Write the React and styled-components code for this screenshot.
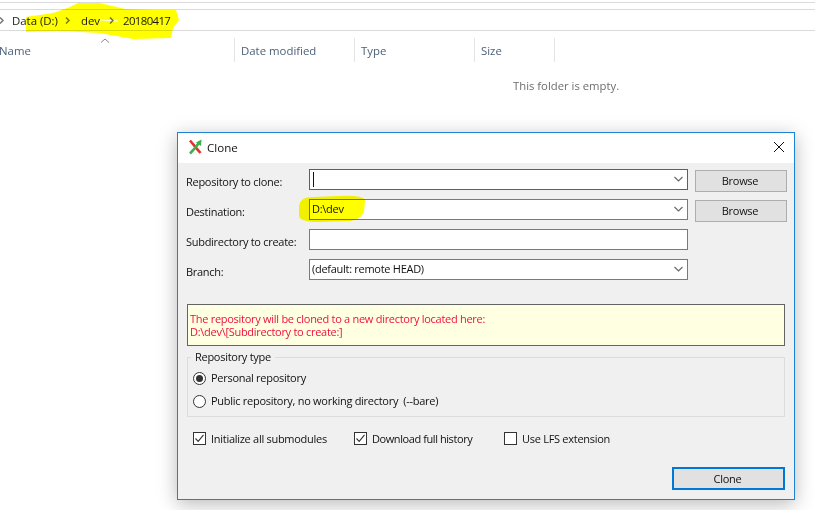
import React from "react";
import styled, { createGlobalStyle } from "styled-components";

const Global = createGlobalStyle`
  html, body { margin: 0; padding: 0; background: #fff; }
  body { font-family: "Open Sans", "Noto Sans", sans-serif; font-size: 11.4px; color: #1a1a1a; }
  * { box-sizing: border-box; }
`;

const Page = styled.div`
  position: relative;
  width: 815px;
  height: 510px;
  overflow: hidden;
  background: #fff;
`;

const Rule = styled.div`
  height: 1px;
  background: #dadada;
  margin-top: ${(p) => p.$top}px;
`;

const Breadcrumb = styled.div`
  display: flex;
  align-items: center;
  height: 21px;
  border-bottom: 1px solid #dadada;
  color: #1a1a1a;
`;

const Crumb = styled.span`
  margin-left: ${(p) => p.$gap}px;
  letter-spacing: ${(p) => p.$track || 0}px;
  white-space: nowrap;
`;

const CrumbArrow = styled.svg`
  width: 5px;
  height: 7px;
  margin-left: ${(p) => p.$gap}px;
  flex: none;
`;

const HeaderRow = styled.div`
  position: relative;
  display: flex;
  height: 24px;
  margin-top: 7px;
  margin-left: -1px;
  color: #4c607a;
`;

const Column = styled.div`
  width: ${(p) => p.$w}px;
  padding-left: ${(p) => p.$pad}px;
  display: flex;
  align-items: center;
  border-right: 1px solid #e4e4e4;
`;

const SortCaret = styled.svg`
  position: absolute;
  left: 101px;
  top: 0;
  width: 10px;
  height: 5px;
`;

const EmptyNote = styled.div`
  margin: 16px 0 0 513px;
  color: #6d6d6d;
  font-size: 11.3px;
`;

const Marker = styled.svg`
  position: absolute;
  left: 0;
  top: 0;
  width: 815px;
  height: 510px;
  mix-blend-mode: multiply;
  pointer-events: none;
  z-index: 5;
`;

const Dialog = styled.div`
  position: absolute;
  left: 177px;
  top: 132px;
  width: 618px;
  height: 368px;
  border: 1px solid #1c83d4;
  background: #f0f0f0;
  box-shadow: 0 4px 18px rgba(0, 0, 0, 0.28);
  display: flex;
  flex-direction: column;
  font-size: 11px;
  letter-spacing: -0.28px;
  color: #111;
`;

const TitleBar = styled.div`
  height: 30px;
  flex: none;
  background: #fff;
  display: flex;
  align-items: center;
  padding: 0 9px 2px 10px;
  font-size: 11.6px;
  letter-spacing: 0;
`;

const TitleText = styled.span`
  margin-left: 4px;
  flex: 1;
`;

const DialogBody = styled.div`
  padding: 6px 9px 0 9px;
  display: flex;
  flex-direction: column;
`;

const FormGrid = styled.div`
  display: grid;
  grid-template-columns: 123px 379px 92px;
  row-gap: 9px;
  grid-auto-rows: 21px;
  margin-left: -1px;
`;

const FieldLabel = styled.label`
  align-self: center;
  padding-top: 3px;
  white-space: nowrap;
`;

const Field = styled.div`
  height: 21px;
  border: 1px solid ${(p) => (p.$focus ? "#0078d7" : "#7a7a7a")};
  background: #fff;
  display: flex;
  align-items: center;
  padding: 0 4px 1px 2px;
  white-space: nowrap;
`;

const FieldValue = styled.span`
  flex: 1;
  padding-bottom: 2px;
`;

const Caret = styled.span`
  display: block;
  width: 1px;
  height: 15px;
  background: #111;
  margin-left: 1px;
  flex: none;
`;

const Spacer = styled.span`
  flex: 1;
`;

const Chevron = styled.svg`
  width: 9px;
  height: 6px;
  flex: none;
`;

const BrowseButton = styled.button`
  margin: 1px 0 -2px 7px;
  height: 22px;
  width: 92px;
  border: 1px solid #adadad;
  background: #e1e1e1;
  font: inherit;
  letter-spacing: inherit;
  color: #111;
  padding: 0 2px 2px 0;
`;

const InfoBox = styled.div`
  margin-top: 24px;
  height: 42px;
  border: 1px solid #646464;
  background: #ffffe1;
  color: #f0103c;
  padding: 7px 2px 0;
`;

const InfoLine = styled.div`
  height: 13px;
  line-height: 13px;
  white-space: nowrap;
`;

const Group = styled.fieldset`
  margin: 11px 0 0 0;
  padding: 13px 5px 0 5px;
  height: 60px;
  border: 1px solid #dcdcdc;
  position: relative;
  display: flex;
  flex-direction: column;
  gap: 9px;
`;

const GroupTitle = styled.div`
  position: absolute;
  left: 3px;
  top: -8px;
  padding: 0 4px;
  background: #f0f0f0;
  line-height: 14px;
`;

const RadioRow = styled.div`
  display: flex;
  align-items: center;
  height: 14px;
  gap: 5px;
  white-space: nowrap;
`;

const OptionText = styled.span`
  padding-bottom: ${(p) => p.$lift || 0}px;
  letter-spacing: ${(p) => p.$track ?? -0.28}px;
`;

const RadioMark = styled.span`
  width: 13px;
  height: 13px;
  border-radius: 50%;
  border: 1px solid #333;
  background: #fff;
  display: flex;
  align-items: center;
  justify-content: center;
  flex: none;
  &::after {
    content: "";
    display: ${(p) => (p.$on ? "block" : "none")};
    width: 7px;
    height: 7px;
    border-radius: 50%;
    background: #333;
  }
`;

const OptionsRow = styled.div`
  margin-top: 15px;
  padding-left: 6px;
  display: flex;
  height: 13px;
  align-items: center;
`;

const CheckOption = styled.div`
  display: flex;
  align-items: center;
  gap: 5px;
  width: ${(p) => p.$w}px;
  white-space: nowrap;
`;

const CheckMark = styled.span`
  width: 13px;
  height: 13px;
  border: 1px solid #333;
  background: #fff;
  display: flex;
  align-items: center;
  justify-content: center;
  flex: none;
`;

const Footer = styled.div`
  display: flex;
  justify-content: flex-end;
  margin-top: 22px;
`;

const CloneButton = styled.button`
  width: 113px;
  height: 23px;
  border: 2px solid #0078d7;
  background: #e1e1e1;
  font: inherit;
  letter-spacing: inherit;
  color: #111;
  padding: 0 2px 1px 0;
`;

const ChevronDown = () => (
  <Chevron viewBox="0 0 9 6">
    <path d="M0.5 1 L4.5 5 L8.5 1" fill="none" stroke="#666" strokeWidth="1.1" />
  </Chevron>
);

const Arrow = ({ gap }) => (
  <CrumbArrow $gap={gap} viewBox="0 0 5 7">
    <path d="M1 0.5 L4 3.5 L1 6.5" fill="none" stroke="#777" strokeWidth="1.5" />
  </CrumbArrow>
);

const Check = () => (
  <svg width="11" height="11" viewBox="0 0 11 11">
    <path d="M1.5 5.5 L4.2 8.3 L9.5 1.8" fill="none" stroke="#333" strokeWidth="1.1" />
  </svg>
);

const Logo = () => (
  <svg width="15" height="16" viewBox="0 0 15 16">
    <path d="M2 1.5 C5 5 9 10 12.5 14" fill="none" stroke="#e0342c" strokeWidth="2.6" />
    <path d="M2 14.5 C5 11.5 8 8 10.5 4.5" fill="none" stroke="#3cb04a" strokeWidth="2.6" />
    <path d="M8 3.5 L13.5 0.5 L13 7 Z" fill="#3cb04a" />
  </svg>
);

export default function App() {
  return (
    <Page>
      <Global />
      <Rule $top={2} />
      <Rule $top={6} />
      <Breadcrumb>
        <Arrow gap={-1} />
        <Crumb $gap={8}>Data (D:)</Crumb>
        <Arrow gap={7} />
        <Crumb $gap={11}>dev</Crumb>
        <Arrow gap={9} />
        <Crumb $gap={9} $track={-0.6}>20180417</Crumb>
      </Breadcrumb>
      <HeaderRow>
        <SortCaret viewBox="0 0 10 5">
          <path d="M1 4.5 L5 1 L9 4.5" fill="none" stroke="#888" strokeWidth="1" />
        </SortCaret>
        <Column $w={236} $pad={0}>Name</Column>
        <Column $w={120} $pad={6}>Date modified</Column>
        <Column $w={120} $pad={6}>Type</Column>
        <Column $w={80} $pad={6}>Size</Column>
      </HeaderRow>
      <EmptyNote>This folder is empty.</EmptyNote>

      <Dialog>
        <TitleBar>
          <Logo />
          <TitleText>Clone</TitleText>
          <svg width="12" height="12" viewBox="0 0 12 12">
            <path d="M1 1 L11 11 M11 1 L1 11" stroke="#111" strokeWidth="1" fill="none" />
          </svg>
        </TitleBar>
        <DialogBody>
          <FormGrid>
            <FieldLabel>Repository to clone:</FieldLabel>
            <Field $focus>
              <Caret />
              <Spacer />
              <ChevronDown />
            </Field>
            <BrowseButton>Browse</BrowseButton>

            <FieldLabel>Destination:</FieldLabel>
            <Field>
              <FieldValue>D:\dev</FieldValue>
              <ChevronDown />
            </Field>
            <BrowseButton>Browse</BrowseButton>

            <FieldLabel>Subdirectory to create:</FieldLabel>
            <Field />
            <span />

            <FieldLabel>Branch:</FieldLabel>
            <Field>
              <FieldValue>(default: remote HEAD)</FieldValue>
              <ChevronDown />
            </Field>
            <span />
          </FormGrid>

          <InfoBox>
            <InfoLine>The repository will be cloned to a new directory located here:</InfoLine>
            <InfoLine>D:\dev\[Subdirectory to create:]</InfoLine>
          </InfoBox>

          <Group>
            <GroupTitle>Repository type</GroupTitle>
            <RadioRow>
              <RadioMark $on />
              <OptionText $lift={2}>Personal repository</OptionText>
            </RadioRow>
            <RadioRow>
              <RadioMark />
              <OptionText $lift={2}>Public repository, no working directory&nbsp; (--bare)</OptionText>
            </RadioRow>
          </Group>

          <OptionsRow>
            <CheckOption $w={161}>
              <CheckMark><Check /></CheckMark>
              <OptionText>Initialize all submodules</OptionText>
            </CheckOption>
            <CheckOption $w={150}>
              <CheckMark><Check /></CheckMark>
              <OptionText $track={-0.42}>Download full history</OptionText>
            </CheckOption>
            <CheckOption $w={120}>
              <CheckMark />
              <OptionText>Use LFS extension</OptionText>
            </CheckOption>
          </OptionsRow>

          <Footer>
            <CloneButton>Clone</CloneButton>
          </Footer>
        </DialogBody>
      </Dialog>

      <Marker viewBox="0 0 815 510">
        <path
          d="M26 17 L53 13 L70 7 L78 3 L100 3 L125 9 L155 10 L176 10 L179 20 L173 28 L171 38 L133 39 L100 33 L60 31 L26 32 Z"
          fill="#ffff00"
        />
        <path d="M100 20 L118 21" stroke="#fff" strokeWidth="1.2" fill="none" />
        <path
          d="M299 206 Q300 197 312 197 L340 196 Q362 195 365 200 L364 212 Q360 220 350 221 L320 222 Q300 222 299 216 Z"
          fill="#ffff00"
        />
      </Marker>
    </Page>
  );
}
